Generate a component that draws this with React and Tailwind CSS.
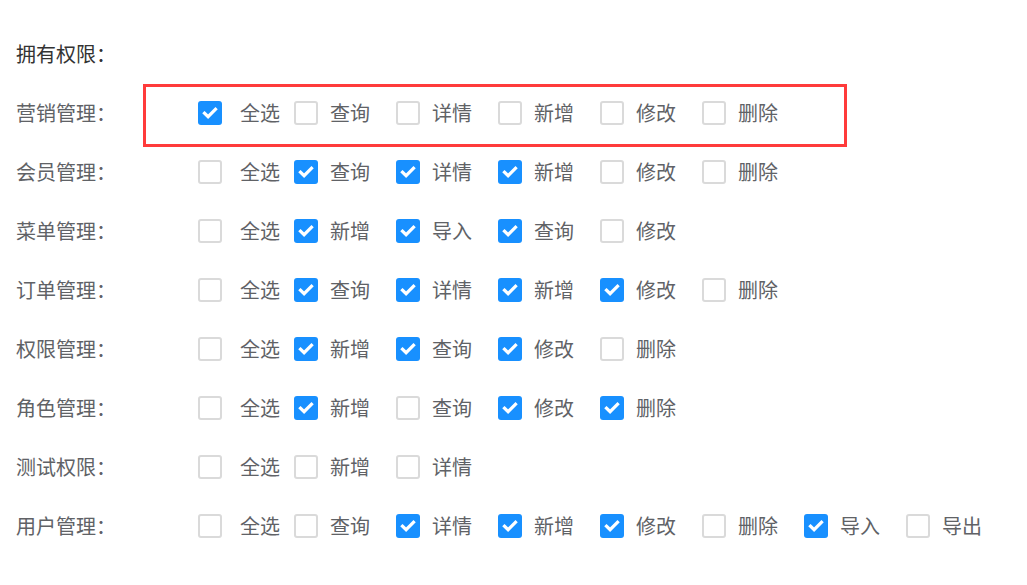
import React from 'react'

const rows = [
  { label: '营销管理', all: true, items: [['查询', false], ['详情', false], ['新增', false], ['修改', false], ['删除', false]] },
  { label: '会员管理', all: false, items: [['查询', true], ['详情', true], ['新增', true], ['修改', false], ['删除', false]] },
  { label: '菜单管理', all: false, items: [['新增', true], ['导入', true], ['查询', true], ['修改', false]] },
  { label: '订单管理', all: false, items: [['查询', true], ['详情', true], ['新增', true], ['修改', true], ['删除', false]] },
  { label: '权限管理', all: false, items: [['新增', true], ['查询', true], ['修改', true], ['删除', false]] },
  { label: '角色管理', all: false, items: [['新增', true], ['查询', false], ['修改', true], ['删除', true]] },
  { label: '测试权限', all: false, items: [['新增', false], ['详情', false]] },
  { label: '用户管理', all: false, items: [['查询', false], ['详情', true], ['新增', true], ['修改', true], ['删除', false], ['导入', true], ['导出', false]] },
]

function Box({ on }) {
  if (on) {
    return (
      <span className="flex h-6 w-6 shrink-0 items-center justify-center rounded-[3px] bg-[#1890ff]">
        <svg width="24" height="24" viewBox="0 0 24 24" fill="none">
          <path d="M6.5 12.2l3.6 3.5 7.4-7.4" stroke="#fff" strokeWidth="3.2" strokeLinecap="square" />
        </svg>
      </span>
    )
  }
  return <span className="h-6 w-6 shrink-0 rounded-[3px] border-2 border-[#dadada] bg-white" />
}

export default function App() {
  return (
    <div className="min-h-screen bg-white pt-6 pl-4 text-[20px] leading-none" style={{ fontFamily: '"Noto Sans CJK SC", "Noto Sans", sans-serif' }}>
      <div className="flex h-[59px] items-center text-[#333]">拥有权限：</div>
      {rows.map((r, i) => (
        <div key={r.label} className="relative flex h-[59px] items-center">
          {i === 0 && (
            <div className="pointer-events-none absolute left-[127px] top-[1px] h-[63px] w-[704px] border-[3px] border-[#ff3b3b]" />
          )}
          <span className="w-[182px] shrink-0 text-[#606266]">{r.label}：</span>
          <div className="flex items-center text-[#606266]">
            <div className="mr-[14px] flex items-center gap-[18px]">
              <Box on={r.all} />
              <span>全选</span>
            </div>
            {r.items.map(([t, on], j) => (
              <div key={j} className="mr-[26px] flex items-center gap-[12px]">
                <Box on={on} />
                <span>{t}</span>
              </div>
            ))}
          </div>
        </div>
      ))}
    </div>
  )
}
